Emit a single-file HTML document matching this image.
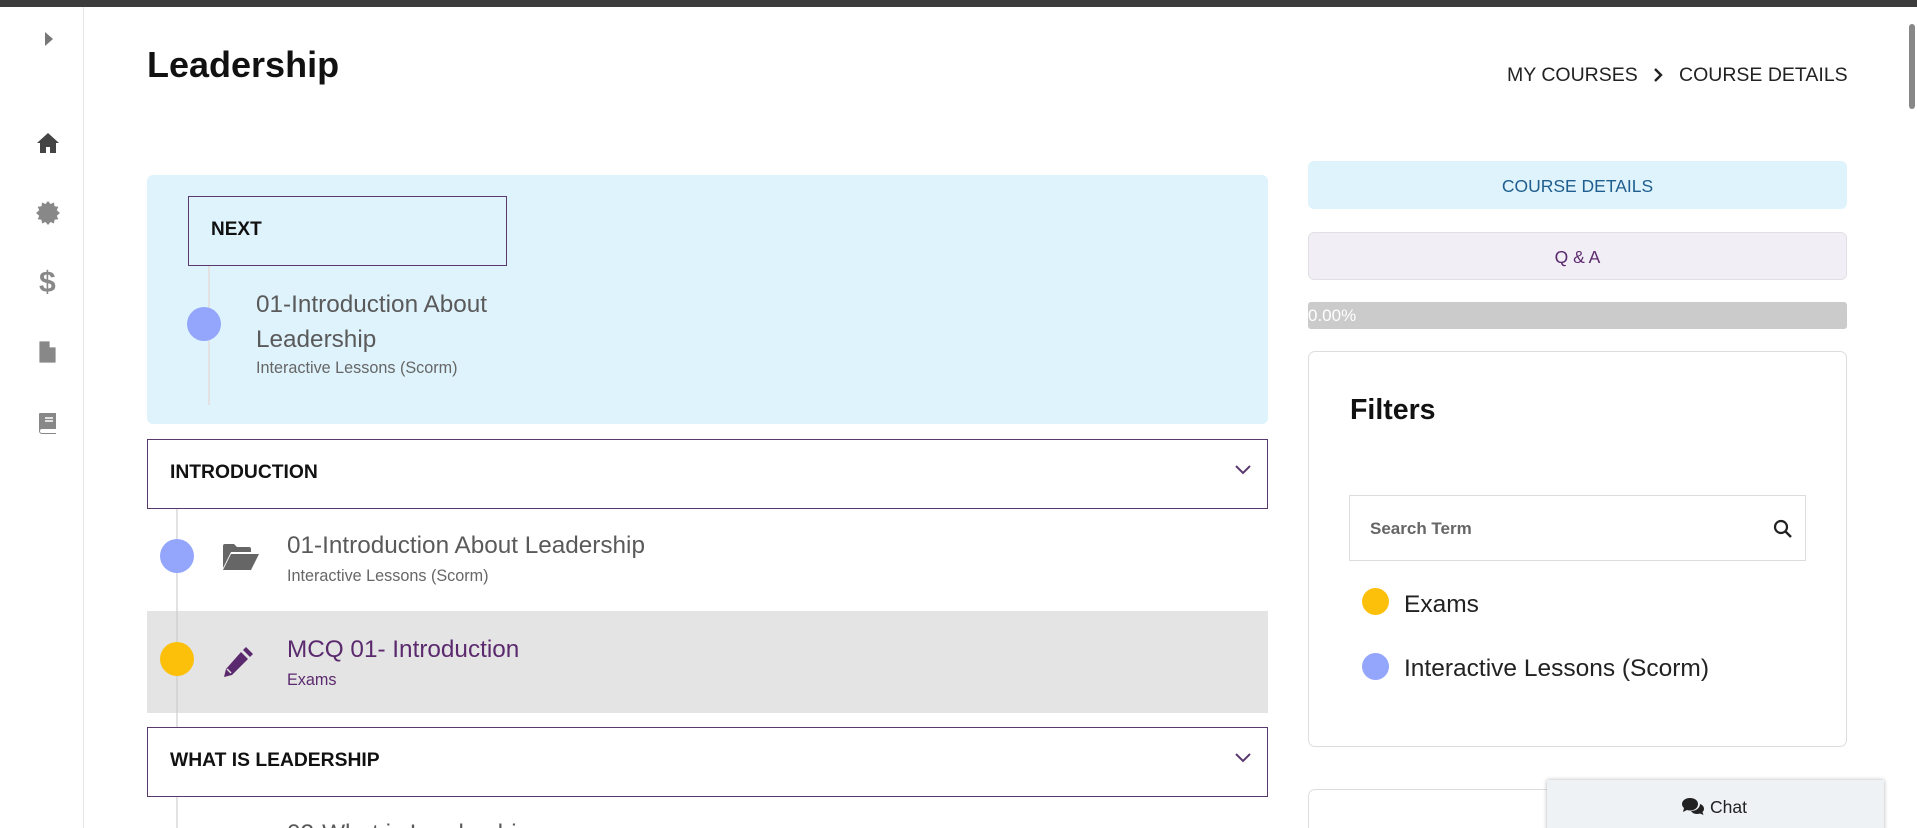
<!DOCTYPE html>
<html><head><meta charset="utf-8"><style>
*{box-sizing:border-box;margin:0;padding:0}
html,body{width:1917px;height:828px;overflow:hidden}
body{background:#fff;font-family:"Liberation Sans",sans-serif;position:relative}
.a{position:absolute}
.top{left:0;top:0;width:1917px;height:7px;background:#3c3c3c}
.side{left:83px;top:7px;width:1px;height:821px;background:#e6e6e6}
.ic{left:36px;width:24px;height:24px}
.h{font-weight:bold;color:#111}
.t{color:#5a5a5a;font-size:24.3px}
.s{color:#666;font-size:16.2px}
.box{border:1px solid #5a3a6e;background:#fff}
.vl{width:2px;background:#e2e2e2}
.dot{border-radius:50%}
</style></head><body>
<div class="a top"></div>
<div class="a side"></div>
<div class="a" style="right:2px;top:24px;width:6px;height:85px;background:#888;border-radius:3px"></div>
<svg class="a" style="left:44px;top:31px" width="10" height="16" viewBox="0 0 10 16"><path d="M1 1 L9 8 L1 15Z" fill="#777"/></svg>
<svg class="a ic" style="top:131px" viewBox="0 0 24 24"><path d="M12 2 L1 12 h3 v10 h6 v-6 h4 v6 h6 V12 h3Z" fill="#444"/></svg>
<svg class="a ic" style="top:201px" viewBox="0 0 24 24"><path d="M12 0l2.5 3 3.5-1.5 .5 3.8 3.8.5L20.8 9.3 24 12l-3.2 2.7 1.5 3.5-3.8.5-.5 3.8-3.5-1.5L12 24l-2.5-3-3.5 1.5-.5-3.8-3.8-.5 1.5-3.5L0 12l3.2-2.7L1.7 5.8l3.8-.5.5-3.8 3.5 1.5Z" fill="#888"/></svg>
<div class="a" style="left:39px;top:266px;font-size:30px;color:#888;font-weight:bold">$</div>
<svg class="a ic" style="top:340px" viewBox="0 0 24 24"><path d="M4 1 h10 l6 6 v15 a1 1 0 0 1-1 1 H4 a1 1 0 0 1-1-1 V2 a1 1 0 0 1 1-1Z M14 1 v6 h6" fill="#888" stroke="#fff" stroke-width=".8"/></svg>
<svg class="a ic" style="top:411px" viewBox="0 0 24 24"><path d="M4 2 h16 v16 H6 a2 2 0 0 0 0 4 h14 v1 H6 a3 3 0 0 1-3-3 V3 a1 1 0 0 1 1-1Z" fill="#888"/><path d="M9 7h8M9 10h8" stroke="#fff" stroke-width="1.5"/></svg>
<div class="a h" style="left:147px;top:44px;font-size:36px">Leadership</div>
<div class="a" style="left:1507px;top:64px;font-size:19.5px;color:#222">MY COURSES</div>
<svg class="a" style="left:1652px;top:67px" width="12" height="16" viewBox="0 0 12 16"><path d="M3 2 L9 8 L3 14" stroke="#222" stroke-width="2.4" fill="none"/></svg>
<div class="a" style="left:1679px;top:64px;font-size:19.5px;color:#222">COURSE DETAILS</div>
<div class="a" style="left:147px;top:175px;width:1121px;height:249px;background:#dff3fc;border-radius:6px"></div>
<div class="a vl" style="left:208px;top:265px;height:140px"></div>
<div class="a box" style="left:188px;top:196px;width:319px;height:70px;background:transparent"></div>
<div class="a h" style="left:211px;top:219px;font-size:19px">NEXT</div>
<div class="a dot" style="left:187px;top:307px;width:34px;height:34px;background:#93a6fb"></div>
<div class="a t" style="left:256px;top:287px;line-height:35px">01-Introduction About<br>Leadership</div>
<div class="a s" style="left:256px;top:359px">Interactive Lessons (Scorm)</div>
<div class="a box" style="left:147px;top:439px;width:1121px;height:70px"></div>
<div class="a h" style="left:170px;top:462px;font-size:19.3px">INTRODUCTION</div>
<svg class="a" style="left:1234px;top:464px" width="18" height="12" viewBox="0 0 18 12"><path d="M2 2 L9 9 L16 2" stroke="#5a3a6e" stroke-width="2" fill="none"/></svg>
<div class="a vl" style="left:176px;top:509px;height:218px"></div>
<div class="a dot" style="left:160px;top:539px;width:34px;height:34px;background:#93a6fb"></div>
<svg class="a" style="left:222px;top:543px" width="38" height="28" viewBox="0 0 38 28"><path d="M1 3 a2 2 0 0 1 2-2 h9 l3 3 h12 a2 2 0 0 1 2 2 v3 H9 L1 25Z" fill="#666"/><path d="M9 11 h28 l-8 16 H1Z" fill="#666"/></svg>
<div class="a t" style="left:287px;top:532px">01-Introduction About Leadership</div>
<div class="a s" style="left:287px;top:567px">Interactive Lessons (Scorm)</div>
<div class="a" style="left:147px;top:611px;width:1121px;height:102px;background:#e4e4e4"></div>
<div class="a vl" style="left:176px;top:611px;height:102px;background:#d6d6d6"></div>
<div class="a dot" style="left:160px;top:642px;width:34px;height:34px;background:#fcc00b"></div>
<svg class="a" style="left:222px;top:644px" width="34" height="34" viewBox="0 0 34 34"><path d="M24 3 l7 7 -3 3 -7 -7Z" fill="#5b2a6e"/><path d="M19 8 l7 7 -16 16 -8 2 2 -8Z" fill="#5b2a6e"/><path d="M5 25 l4 4" stroke="#e4e4e4" stroke-width="1.5"/></svg>
<div class="a t" style="left:287px;top:636px;color:#5b2a6e">MCQ 01- Introduction</div>
<div class="a s" style="left:287px;top:671px;color:#5b2a6e">Exams</div>
<div class="a box" style="left:147px;top:727px;width:1121px;height:70px"></div>
<div class="a h" style="left:170px;top:750px;font-size:19.3px">WHAT IS LEADERSHIP</div>
<svg class="a" style="left:1234px;top:752px" width="18" height="12" viewBox="0 0 18 12"><path d="M2 2 L9 9 L16 2" stroke="#5a3a6e" stroke-width="2" fill="none"/></svg>
<div class="a vl" style="left:176px;top:797px;height:31px"></div>
<div class="a t" style="left:287px;top:820px">02-What is Leadership</div>
<div class="a" style="left:1308px;top:161px;width:539px;height:48px;background:#dff3fc;border-radius:6px;text-align:center;line-height:50px;color:#1f5e8e;font-size:17.5px">COURSE DETAILS</div>
<div class="a" style="left:1308px;top:232px;width:539px;height:48px;background:#f1eef5;border:1px solid #e2e0e6;border-radius:6px;text-align:center;line-height:48px;color:#5b2a6e;font-size:17.5px">Q &amp; A</div>
<div class="a" style="left:1308px;top:302px;width:539px;height:27px;background:#cbcbcb;border-radius:3px;color:#fff;font-size:17px;line-height:27px">0.00%</div>
<div class="a" style="left:1308px;top:351px;width:539px;height:396px;border:1px solid #ddd;border-radius:7px"></div>
<div class="a h" style="left:1350px;top:394px;font-size:28.5px">Filters</div>
<div class="a" style="left:1349px;top:495px;width:457px;height:66px;border:1px solid #ddd"></div>
<div class="a" style="left:1370px;top:519px;font-size:17px;font-weight:bold;color:#666">Search Term</div>
<svg class="a" style="left:1773px;top:519px" width="20" height="20" viewBox="0 0 20 20"><circle cx="8" cy="8" r="6" stroke="#222" stroke-width="2.2" fill="none"/><path d="M12.5 12.5 L18 18" stroke="#222" stroke-width="2.4"/></svg>
<div class="a dot" style="left:1362px;top:588px;width:27px;height:27px;background:#fcc00b"></div>
<div class="a" style="left:1404px;top:591px;font-size:24.5px;color:#222">Exams</div>
<div class="a dot" style="left:1362px;top:653px;width:27px;height:27px;background:#93a6fb"></div>
<div class="a" style="left:1404px;top:655px;font-size:24.5px;color:#222">Interactive Lessons (Scorm)</div>
<div class="a" style="left:1308px;top:789px;width:539px;height:60px;border:1px solid #ddd;border-radius:7px"></div>
<div class="a" style="left:1547px;top:780px;width:337px;height:60px;background:#eef2f5;box-shadow:0 0 4px rgba(0,0,0,.3)"></div>
<svg class="a" style="left:1681px;top:797px" width="24" height="20" viewBox="0 0 24 20"><path d="M9 1 C4 1 1 4 1 7 c0 2 1 3 2 4 l-1 4 4-2 c1 .3 2 .5 3 .5 5 0 8-3 8-6.5S14 1 9 1Z" fill="#222"/><path d="M19 7 c3 1 4 3 4 5 0 1-.5 2-1.5 3 l1 3-3.5-1.5 c-1 .3-2 .5-3 .5-3 0-5-1.5-6-3 5 0 9-3 9-7Z" fill="#222"/></svg>
<div class="a" style="left:1710px;top:797px;font-size:17.5px;color:#222">Chat</div>
</body></html>
